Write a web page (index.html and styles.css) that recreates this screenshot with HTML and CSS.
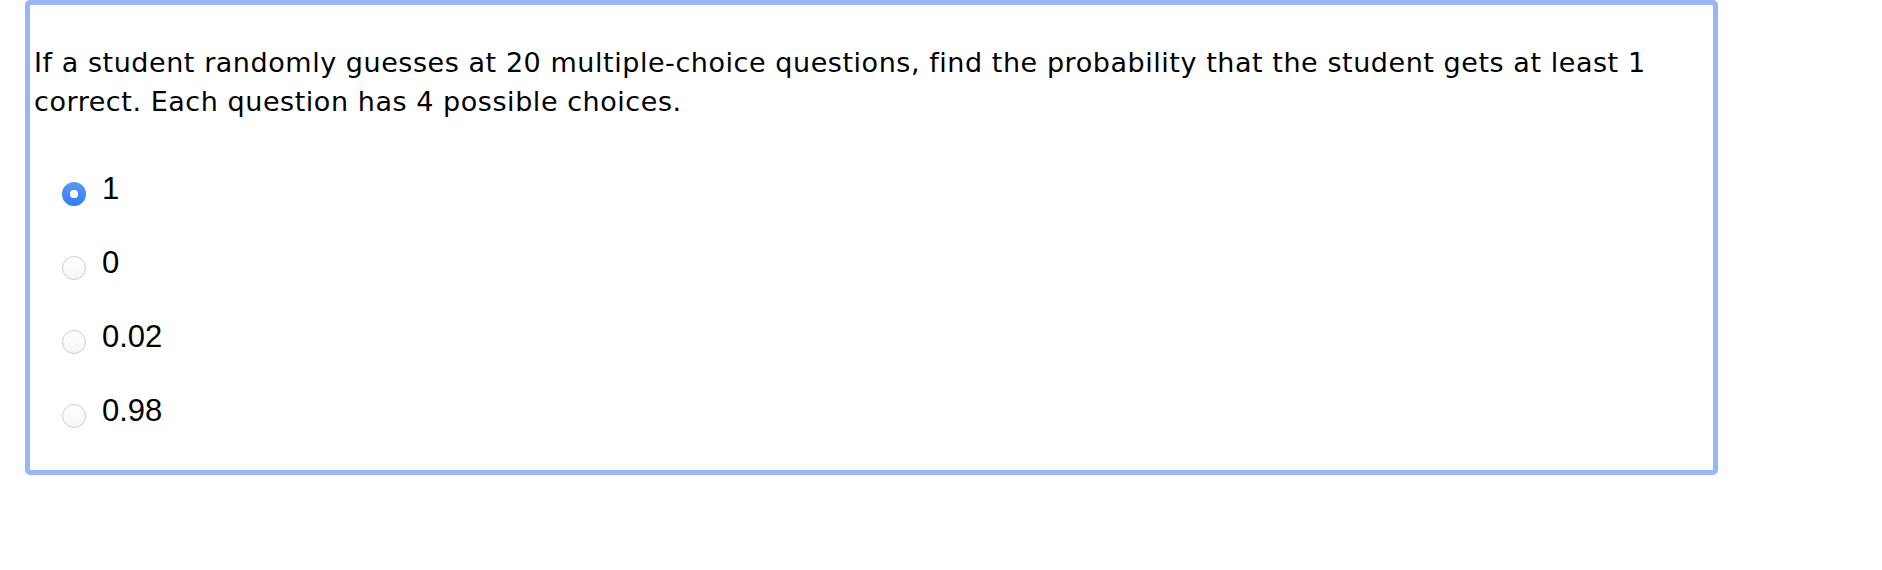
FILE: index.html
```html
<!DOCTYPE html>
<html lang="en">
<head>
    <meta charset="UTF-8">
    <meta name="viewport" content="width=device-width, initial-scale=1.0">
    <title>Question</title>
    <link rel="stylesheet" href="styles.css">
</head>
<body>
    <div class="question-box">
        <p class="question-text">If a student randomly guesses at 20 multiple-choice questions, find the probability that the student gets at least 1 correct. Each question has 4 possible choices.</p>

        <form class="choices">
            <label class="choice">
                <input type="radio" name="answer" value="1" checked>
                <span>1</span>
            </label>
            <label class="choice">
                <input type="radio" name="answer" value="0">
                <span>0</span>
            </label>
            <label class="choice">
                <input type="radio" name="answer" value="0.02">
                <span>0.02</span>
            </label>
            <label class="choice">
                <input type="radio" name="answer" value="0.98">
                <span>0.98</span>
            </label>
        </form>
    </div>
</body>
</html>
```

FILE: styles.css
```css
* {
    margin: 0;
    padding: 0;
    box-sizing: border-box;
}

body {
    background-color: white;
    color: #000;
}

.question-box {
    margin-left: 25px;
    width: 1693px;
    height: 475px;
    border: 5px solid #98b6f6;
    border-radius: 5px;
    padding: 38px 4px 0;
}

.question-text {
    font-family: "DejaVu Sans", Verdana, sans-serif;
    font-size: 27px;
    letter-spacing: 0.55px;
    line-height: 39px;
    margin-bottom: 31px;
}

.choices {
    display: flex;
    flex-direction: column;
}

.choice {
    display: flex;
    align-items: center;
    height: 74px;
    font-family: "Liberation Sans", Arial, sans-serif;
    font-size: 31px;
    line-height: 74px;
    cursor: pointer;
}

.choice input {
    appearance: none;
    -webkit-appearance: none;
    width: 24px;
    height: 24px;
    margin: 10px 16px 0 28px;
    border-radius: 50%;
    border: 1px solid #cdcdcd;
    background: linear-gradient(#ffffff, #f6f6f6);
    flex-shrink: 0;
}

.choice input:checked {
    border: none;
    background: radial-gradient(circle, #ffffff 0 4px, transparent 4.5px),
                linear-gradient(#5a9af8, #2f7cf5);
}
```
